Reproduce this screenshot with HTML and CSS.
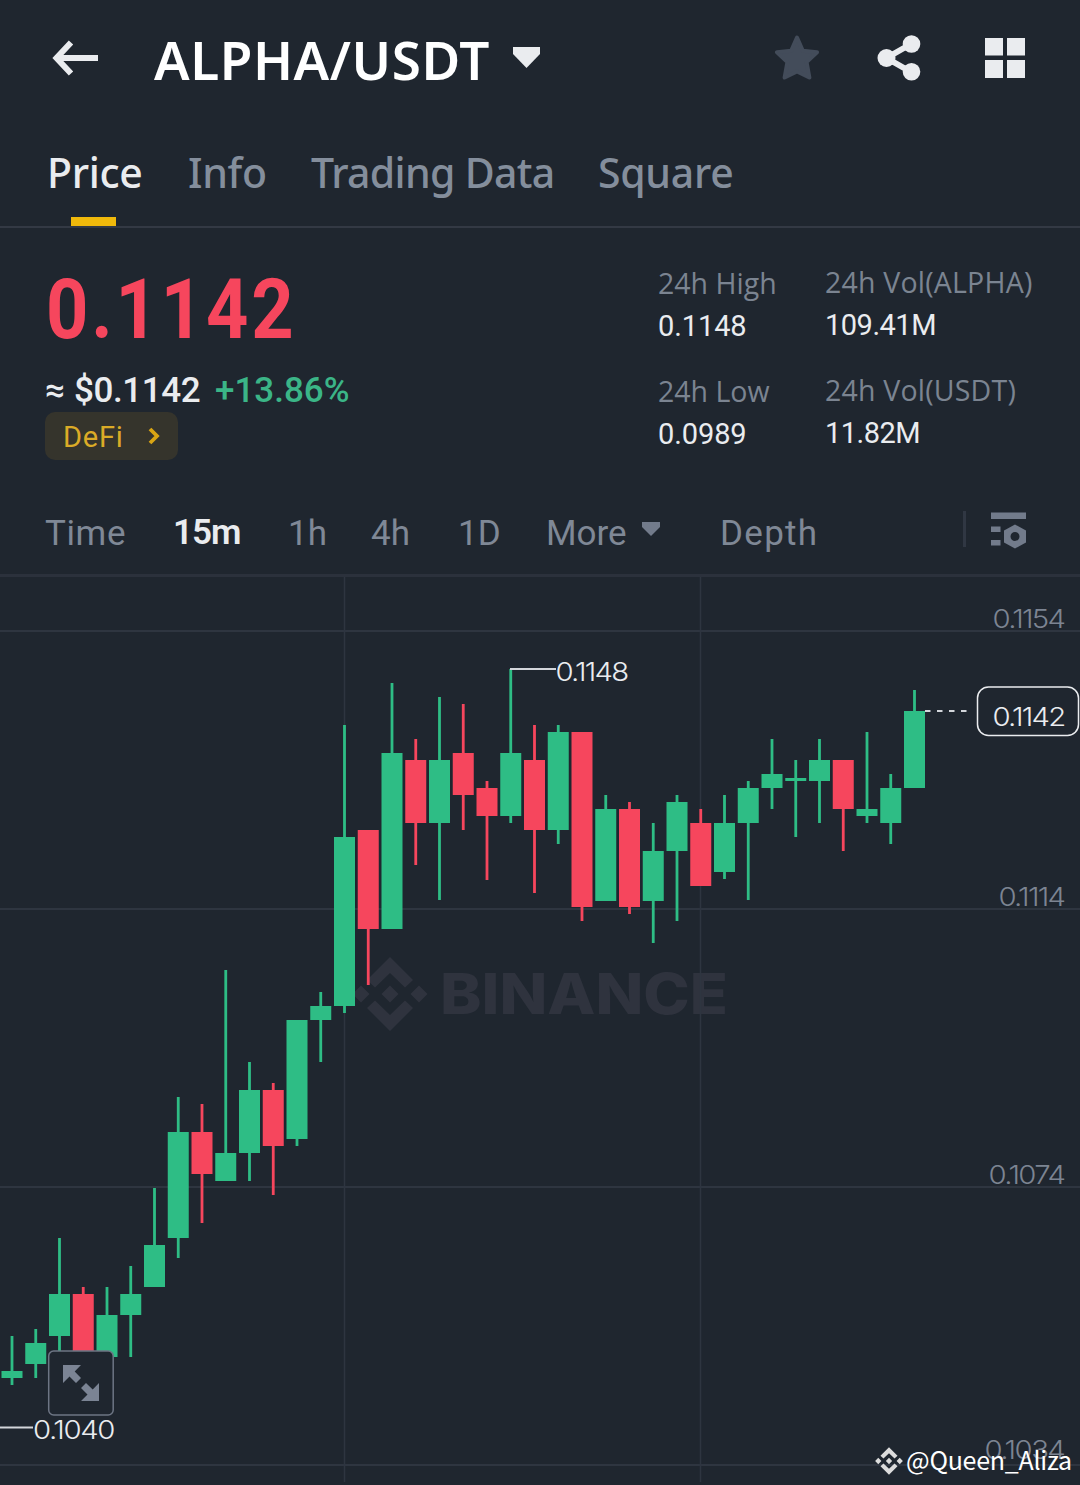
FILE: index.html
```html
<!DOCTYPE html>
<html lang="en">
<head>
<meta charset="utf-8">
<title>ALPHA/USDT</title>
<link rel="stylesheet" href="styles.css">
</head>
<body>
<header class="header">
  <svg class="back" width="46" height="38" viewBox="0 0 46 38"><path d="M19 3.500 4.500 19 19 34.500M4.500 19H46" fill="none" stroke="#eaecef" stroke-width="6"/></svg>
  <h1 class="pair">ALPHA/USDT</h1>
  <svg class="pair-caret" width="28" height="22" viewBox="0 0 28 22"><path d="M0 0H27V7L13.500 21 0 7Z" fill="#eaecef"/></svg>
  <nav class="actions">
    <svg width="46" height="46" viewBox="0 0 46 46"><path d="M23 2.500 28.800 15.800 43 17.200 32.600 27 35.400 42.500 23 36.400 10.600 42.500 13.400 27 3 17.200 17.200 15.800Z" fill="#434c5a" stroke="#434c5a" stroke-width="4" stroke-linejoin="round"/></svg>
    <svg width="44" height="46" viewBox="0 0 44 46"><path d="M34 9 9.500 23 34 37" fill="none" stroke="#eaecef" stroke-width="6"/><g fill="#eaecef"><circle cx="34.500" cy="9" r="8.800"/><circle cx="9.500" cy="23" r="9"/><circle cx="34.500" cy="36.800" r="8.800"/></g></svg>
    <svg width="40" height="40" viewBox="0 0 40 40"><path d="M0 0H18V17.500H0ZM22 0H40V17.500H22ZM0 22H18V40H0ZM22 22H40V40H22Z" fill="#eaecef"/></svg>
  </nav>
</header>
<nav class="tabs">
  <span class="tab tab-active">Price</span>
  <span class="tab">Info</span>
  <span class="tab tab-data">Trading Data</span>
  <span class="tab">Square</span>
</nav>
<section class="summary">
  <div class="quote">
    <div class="price">0.1142</div>
    <div class="fiat"><span class="approx">≈</span><span class="usd">$0.1142</span><span class="change">+13.86%</span></div>
    <div class="tag"><span class="tag-name">DeFi</span><svg width="12" height="18" viewBox="0 0 12 18"><path d="M2 2 9 9 2 16" fill="none" stroke="#d9a514" stroke-width="3.800"/></svg></div>
  </div>
  <div class="stats">
    <div class="stat"><div class="label">24h High</div><div class="value">0.1148</div></div>
    <div class="stat"><div class="label">24h Low</div><div class="value">0.0989</div></div>
  </div>
  <div class="stats stats-volume">
    <div class="stat"><div class="label">24h Vol(ALPHA)</div><div class="value">109.41M</div></div>
    <div class="stat"><div class="label">24h Vol(USDT)</div><div class="value">11.82M</div></div>
  </div>
</section>
<nav class="intervals">
  <span class="time">Time</span>
  <span class="current">15m</span>
  <span>1h</span>
  <span>4h</span>
  <span>1D</span>
  <span class="more">More<svg width="20" height="14" viewBox="0 0 20 14"><path d="M1 0H19V5L10 14 1 5Z" fill="#727b8b"/></svg></span>
  <span class="depth">Depth</span>
  <span class="settings">
    <svg width="36" height="38" viewBox="0 0 36 38"><g fill="#727b8b"><path d="M0 1.500H35V8H0ZM0 15.500H9.500V21H0ZM0 29H9.500V34.500H0Z"/><path fill-rule="evenodd" d="M24 13.500 35 19.500V31.500L24 37.500 13 31.500V19.500ZM24 21A4.500 4.500 0 1 0 24 30 4.500 4.500 0 1 0 24 21Z"/></g></svg>
  </span>
</nav>
<main class="chart">
  <svg class="plot" width="1080" height="908" viewBox="0 577 1080 908">
    <defs>
      <g id="logo"><path d="M0-37 23-14 15-6.500 0-21-15-6.500-23-14ZM0 37-23 14-15 6.500 0 21 15 6.500 23 14ZM0-8.500 8.500 0 0 8.500-8.500 0ZM-29-8.500-20.500 0-29 8.500-37.500 0ZM29-8.500 37.500 0 29 8.500 20.500 0Z"/></g>
    </defs>
    <g class="watermark">
      <use href="#logo" x="390" y="994"/>
      <text x="440" y="1014" textLength="288" lengthAdjust="spacingAndGlyphs">BINANCE</text>
    </g>
    <path class="grid" d="M0 631H1080M0 909H1080M0 1187H1080M0 1465H1080"/>
    <path class="grid grid-v" d="M344.500 577V1482M700.500 577V1482"/>
    <g id="candles"></g>
    <g class="axis">
      <text transform="translate(992.500 628) scale(1.13 1)" textLength="65">0.1154</text>
      <text transform="translate(998.500 906) scale(1.13 1)" textLength="59.700">0.1114</text>
      <text transform="translate(988.500 1184) scale(1.13 1)" textLength="68.500">0.1074</text>
      <text transform="translate(984.500 1459) scale(1.13 1)" textLength="72">0.1034</text>
    </g>
    <path class="leader" d="M510 669H556M0 1427.500H33"/>
    <path class="leader dashed" d="M925 711H967"/>
    <rect class="last-box" x="977.500" y="687" width="101" height="48.500" rx="11"/>
    <g class="mark">
      <text transform="translate(555.500 681) scale(1.13 1)" textLength="65.300">0.1148</text>
      <text transform="translate(33 1439) scale(1.13 1)" textLength="73">0.1040</text>
      <text transform="translate(992.500 726) scale(1.13 1)" textLength="65.300">0.1142</text>
    </g>
    <rect class="expand" x="48.700" y="1351" width="64.500" height="64" rx="5"/>
    <path class="expand-arrows" d="M63 1365H81L74.700 1371.500 81 1378 76 1383 69.500 1376.500 63 1383ZM99 1401V1383L92.700 1389.500 86 1383 81 1388 87.500 1394.500 81 1401Z"/>
    <g class="signature">
      <use href="#logo" transform="translate(889 1461) scale(.37)"/>
      <text x="906" y="1470" textLength="166">@Queen_Aliza</text>
    </g>
  </svg>
</main>
<script src="chart.js"></script>
</body>
</html>
```
FILE: styles.css
```css
* { box-sizing: border-box; }
body { margin: 0; width: 1080px; height: 1485px; overflow: hidden; background: #1f262f; color: #eaecef; font-family: Roboto, sans-serif; }
svg { display: block; flex: none; }

.header { display: flex; align-items: center; height: 116px; padding: 0 55px 0 52px; }
.back { margin-right: 56px; }
.pair { margin: 0; padding-top: 3px; width: 337px; font: 600 53px/80px "Noto Sans", sans-serif; letter-spacing: .6px; color: #fff; white-space: nowrap; }
.pair-caret { margin-left: 22px; }
.actions { display: flex; align-items: center; margin-left: auto; }
.actions svg + svg { margin-left: 57px; }
.actions svg + svg + svg { margin-left: 64px; }

.tabs { display: grid; grid-template-columns: 141px 123px 287px 1fr; height: 112px; padding-left: 47px; border-bottom: 2px solid #333944; font: 500 41px/112px "Noto Sans", sans-serif; letter-spacing: -.3px; color: #848e9c; white-space: nowrap; }
.tab-active { position: relative; height: 110px; color: #eaecef; }
.tab-active::after { content: ""; position: absolute; left: 24px; bottom: 0; width: 45px; height: 9px; background: #f0b90b; }
.tab-data { letter-spacing: -.7px; }

.summary { display: flex; height: 262px; padding: 39px 0 0 45px; white-space: nowrap; }
.quote { width: 613px; }
.price { width: 300px; height: 84px; margin-left: 1px; font-size: 84px; line-height: 86px; font-weight: 700; letter-spacing: 3.200px; color: #f6465d; transform: scaleX(.88); transform-origin: 0 0; }
.fiat { display: flex; height: 40px; margin-top: 19px; font-size: 35px; line-height: 42px; font-weight: 500; }
.approx { width: 29px; }
.usd { width: 141px; letter-spacing: -.4px; }
.change { color: #3bb587; }
.tag { display: flex; align-items: center; width: 133px; height: 48px; margin-top: 2px; padding-left: 18px; border-radius: 10px; background: #35342c; color: #dbab27; font-size: 29px; }
.tag-name { width: 85px; padding-top: 2px; letter-spacing: .8px; }
.stats { width: 167px; margin-top: -3px; padding-top: 1px; }
.stats-volume { width: 255px; padding-top: 0; }
.stat { height: 108px; font-size: 29px; line-height: 41px; }
.label { height: 41px; line-height: 37px; font-family: "Open Sans", sans-serif; font-size: 28.500px; color: #7b8491; }
.stats-volume .label { letter-spacing: .2px; }
.value { letter-spacing: -.1px; }
.stats-volume .value { letter-spacing: -.5px; }

.intervals { display: grid; grid-template-columns: 128px 115px 83px 87px 88px 174px 243px 1fr; height: 87px; padding-left: 45px; border-bottom: 3px solid #2b313c; font-size: 35px; line-height: 88px; color: #7f8896; white-space: nowrap; }
.intervals > * { height: 84px; }
.time { letter-spacing: .6px; }
.current { color: #eaecef; font-weight: 600; letter-spacing: -1px; line-height: 86px; }
.more { display: flex; gap: 14px; }
.more svg { margin-top: 32px; }
.depth { letter-spacing: 1.300px; }
.intervals .settings { height: 36px; margin-top: 21px; padding-left: 25px; border-left: 3px solid #303743; }

.plot { font-family: Inter, sans-serif; font-size: 26px; }
.watermark { fill: #2f333e; font: 800 56px Inter, sans-serif; }
.grid { stroke: #2e3540; stroke-width: 2; }
.grid-v { stroke-width: 1.500; }
.up { fill: #2ebd85; }
.down { fill: #f6465d; }
.axis { fill: #7c8492; font-weight: 300; }
.mark { fill: #eaecef; font-weight: 300; }
.leader { fill: none; stroke: #d3d6db; stroke-width: 1.800; }
.dashed { stroke-dasharray: 5.500 6.500; }
.last-box { fill: #1f262f; stroke: #eaecef; stroke-width: 1.500; }
.expand { fill: #1f262f; stroke: #6d7584; stroke-width: 1.500; }
.expand-arrows { fill: #7b8494; }
.signature { fill: #fff; font: 400 25px "Noto Sans CJK SC", sans-serif; }
.signature use { fill: #dcdcdc; }
```
FILE: chart.js
```js
// Each candle: direction, high, body top, body bottom, low
const candles = [
  ["up",1336,1371,1378,1385],["up",1329,1343,1364,1378],["up",1238,1294,1336,1357],["down",1287,1294,1357,1357],
  ["up",1287,1315,1357,1357],["up",1266,1294,1315,1357],["up",1188,1245,1287,1287],["up",1097,1132,1238,1258],
  ["down",1104,1132,1174,1223],["up",970,1153,1181,1181],["up",1062,1090,1153,1181],["down",1083,1090,1146,1195],
  ["up",1020,1020,1139,1146],["up",992,1006,1020,1062],["up",725,837,1006,1013],["down",830,830,929,985],
  ["up",683,753,929,929],["down",739,760,823,865],["up",697,760,823,900],["down",704,753,795,830],
  ["down",781,788,816,880],["up",669,753,816,823],["down",725,760,830,893],["up",725,732,830,844],
  ["down",732,732,907,921],["up",795,809,901,901],["down",802,809,907,914],["up",823,851,901,943],
  ["up",795,802,851,921],["down",809,823,886,886],["up",795,823,872,879],["up",781,788,823,900],
  ["up",739,774,788,809],["up",760,778,781,837],["up",739,760,781,823],["down",760,760,809,851],
  ["up",732,809,816,823],["up",774,788,823,844],["up",690,711,788,788]
];
const layer = document.getElementById("candles");
candles.forEach(([kind, high, top, bottom, low], i) => {
  const x = 12 + 23.75 * i;
  const path = document.createElementNS("http://www.w3.org/2000/svg", "path");
  path.setAttribute("class", kind);
  path.setAttribute("d", `M${x - 1.4} ${high}h2.800V${low}h-2.800ZM${x - 10.5} ${top}h21V${bottom}h-21Z`);
  layer.appendChild(path);
});
```
